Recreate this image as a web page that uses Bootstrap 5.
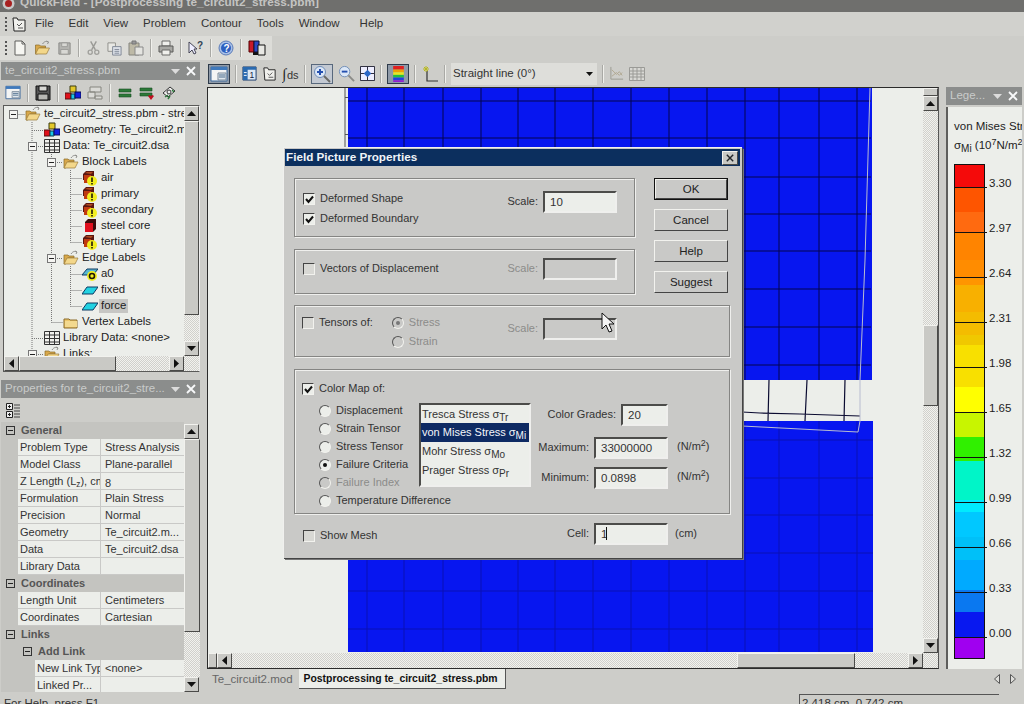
<!DOCTYPE html>
<html lang="en">
<head>
<meta charset="UTF-8">
<title>QuickField - Postprocessing te_circuit2_stress.pbm</title>
<link href="https://cdn.jsdelivr.net/npm/bootstrap@5.3.0/dist/css/bootstrap.min.css" rel="stylesheet">
<style>
    html, body { margin: 0; background: #cfcfcb; }
    body { font: 11px/1.2 "Liberation Sans", Arial, sans-serif; color: #2a2a2a; }
    .qf-app { width: 1024px; height: 704px; overflow: hidden; position: relative; background: #cdcdc9; }
    svg { display: block; flex: none; }

    /* title, menu, main toolbar */
    .qf-title { height: 12px; background: #6f6f6d; color: #c4c4c2; font-weight: bold; font-size: 11.8px; line-height: 5px; padding-left: 2px; overflow: hidden; }
    .qf-title svg { margin-right: 5px; margin-top: -3px; }
    .qf-menu { height: 24px; background: #d1d1cd; padding-left: 5px; font-size: 11.5px; color: #333; }
    .qf-menu span { margin-right: 15px; }
    .qf-menu span:nth-last-child(2) { margin-right: 20px; }
    .qf-grip { width: 2px; height: 14px; margin-right: 4px; flex: none; background: repeating-linear-gradient(#555 0 2px, transparent 2px 4px); }
    .qf-tbar { height: 24px; width: 272px; background: #dcdcd8; padding-left: 5px; gap: 6px; }
    .qf-tbar .qf-grip { margin-right: -1px; }
    .qf-sep { width: 1px; height: 18px; background: #a9a9a5; border-right: 1px solid #f0f0ec; box-sizing: content-box; flex: none; }

    /* left docks */
    .qf-main { height: 633px; }
    .qf-left { width: 204px; flex: none; padding: 2px 4px 0 1px; }
    .qf-dockhead { height: 18px; background: #8b8d8c; color: #c9cbca; padding: 0 4px; font-size: 11.5px; gap: 6px; white-space: nowrap; overflow: hidden; }
    .qf-dockhead > span { flex-grow: 1; overflow: hidden; }
    .qf-docktools { height: 25px; gap: 6px; padding-left: 4px; }
    .qf-docktools2 { height: 24px; padding-left: 5px; }
    .qf-tree { height: 267px; margin-left: 2px; border: 1px solid #5a5a58; border-right-color: #eee; display: grid; grid-template-columns: 1fr 15px; grid-template-rows: 1fr 15px; background: #eceeea; }
    .qf-treepane { position: relative; overflow: hidden; font-size: 11.4px; color: #222; }
    .qf-dots { position: absolute; left: 0; top: 0; }
    .qf-node { height: 16px; white-space: nowrap; position: relative; }
    .qf-d0 { padding-left: 5px; }
    .qf-d1 { padding-left: 24px; }
    .qf-d2 { padding-left: 43px; }
    .qf-d3 { padding-left: 62px; }
    .qf-slot { width: 9px; height: 9px; margin-right: 7px; flex: none; }
    .qf-exp { border: 1px solid #777; background: #f5f5f2; position: relative; }
    .qf-exp::after { content: ""; position: absolute; left: 1px; right: 1px; top: 3px; height: 1px; background: #222; }
    .qf-node svg { margin-right: 3px; }
    .qf-picked { background: #c6c6c4; padding: 0 2px; margin-left: -2px; }
    .qf-gap8 { height: 8px; }

    /* property grid */
    .qf-grid { height: 270px; display: flex; overflow: hidden; }
    .qf-rows { width: 183px; flex: none; font-size: 11px; color: #333; }
    .qf-prow { height: 17px; background: #c4c4c0; white-space: nowrap; }
    .qf-gutter { width: 17px; flex: none; padding-left: 5px; }
    .qf-gutter2 { width: 34px; padding-left: 22px; }
    .qf-pname, .qf-pval { background: #eceeea; height: 17px; line-height: 16px; border-bottom: 1px solid #c9c9c7; overflow: hidden; }
    .qf-pname { flex: 1 1 0; padding-left: 2px; border-right: 1px solid #c9c9c7; }
    .qf-pval { width: 83px; flex: none; padding-left: 4px; }
    .qf-pval-low { padding-top: 2px; }
    .qf-pgroup { font-weight: bold; color: #555; }
    .qf-box { display: block; width: 9px; height: 9px; border: 1px solid #333; position: relative; }
    .qf-box::after { content: ""; position: absolute; left: 1px; right: 1px; top: 3px; height: 1px; background: #222; }

    /* scrollbars */
    .qf-track { background: repeating-conic-gradient(#d0d0cc 0 25%, #f2f2ee 0 50%) 0 0 / 2px 2px; flex-grow: 1; }
    .qf-raised { background: #c9c9c5; border: 1px solid; border-color: #f2f2ee #4a4a48 #4a4a48 #f2f2ee; }
    .qf-sbtn { width: 15px; height: 15px; flex: none; display: flex; align-items: center; justify-content: center; }
    .qf-vbar { width: 15px; display: flex; flex-direction: column; }
    .qf-hbar { height: 15px; display: flex; }
    .qf-thumb-tree { height: 194px; flex: none; }
    .qf-thumb-treeh { width: 97px; flex: none; }
    .qf-thumb-prop { height: 193px; flex: none; }
    .qf-thumb-view { height: 81px; flex: none; }
    .qf-thumb-viewh { width: 118px; flex: none; }
    .qf-viewpad { height: 8px; flex: none; }
    .qf-viewpadh { width: 9px; flex: none; }
    .qf-trackA { height: 214px; flex: none; flex-grow: 0; }
    .qf-trackB { width: 505px; flex: none; flex-grow: 0; }
    .qf-propbar { width: 16px; margin-top: 2px; }

    /* centre */
    .qf-right { flex-grow: 1; min-width: 0; padding-left: 3px; }
    .qf-viewtools { height: 27px; gap: 5px; padding-left: 1px; width: 738px; }
    .qf-tgl { width: 22px; height: 20px; display: flex; align-items: center; justify-content: center; flex: none; }
    .qf-tgl-on { background: #8f9aa8; border: 1px solid #2d3a4a; }
    .qf-tgl-soft { background: #c3c9d2; border: 1px solid #58687c; }
    .qf-drop { width: 146px; height: 22px; background: #dededa; font-size: 11.5px; padding-left: 2px; color: #333; flex: none; }
    .qf-work { height: 582px; }
    .qf-view { width: 732px; flex: none; border: 1px solid #2b2b2b; border-right: 1px solid #555; display: grid; grid-template-columns: 1fr 15px; grid-template-rows: 1fr 15px; background: #eceeea; }
    .qf-plot { overflow: hidden; position: relative; }
    .qf-corner { background: repeating-conic-gradient(#d0d0cc 0 25%, #f2f2ee 0 50%) 0 0 / 2px 2px; }

    /* legend */
    .qf-legend { width: 76px; margin-left: 7px; flex: none; }
    .qf-leghead { width: 76px; }
    .qf-legbody { height: 562px; margin-top: 2px; background: #eceeea; border-left: 2px solid #5e5e5c; padding: 13px 0 0 6px; overflow: hidden; font-size: 11.5px; white-space: nowrap; color: #222; }
    .qf-legbody p { margin: 0; height: 19px; }
    .qf-legbody sub { font-size: 10px; }
    .qf-legbody sup { font-size: 9px; }
    .qf-legsvg { margin-top: 4px; margin-left: 0; }
    .qf-legsvg text { font: 11.5px "Liberation Sans", Arial, sans-serif; fill: #222; }

    /* tabs and status */
    .qf-tabs { height: 24px; border: 0; padding-left: 2px; flex-wrap: nowrap; white-space: nowrap; }
    .qf-tabs .nav-link { font-size: 11.5px; height: 20px; padding: 4px 6px 0 3px; border: 0; border-radius: 0; color: #666; background: none; margin: 0; }
    .qf-tabs .nav-link.active { background: #eceeea; color: #111; font-weight: bold; font-size: 10.4px; border-right: 1px solid #555; border-bottom: 1px solid #555; width: 207px; padding-left: 5px; }
    .qf-tabnav { gap: 10px; padding: 0 8px 4px 0; }
    .qf-status { height: 11px; font-size: 11.5px; padding: 4px 0 0 4px; overflow: hidden; color: #333; position: relative; }
    .qf-status > div { position: absolute; left: 799px; top: 1px; width: 200px; border: 1px solid #555; border-right: 0; padding: 2px 0 0 2px; height: 20px; }

    /* dialog */
    .qf-dialog { position: absolute; left: 283px; top: 147px; width: 459px; height: 411px; padding: 2px; background: #c9c9c7; border: 0; box-shadow: inset 1px 1px 0 #f0f0ee, 1px 1px 0 #444, 2px 2px 0 #777; color: #333; }
    .qf-dtitle { height: 17px; background: #0c2f5e; color: #f0f4f8; font-weight: bold; font-size: 11.7px; padding: 0 2px 0 1px; }
    .qf-x { width: 16px; height: 14px; padding: 0; display: flex; align-items: center; justify-content: center; }
    .qf-dbody { padding: 12px 10px 0 9px; }
    .qf-gbox { border: 1px solid #858583; box-shadow: 1px 1px 0 #efefed, inset 1px 1px 0 #efefed; }
    .qf-g1 { height: 59px; padding: 10px 17px 0 8px; }
    .qf-g2 { height: 45px; padding: 0 17px 6px 8px; margin-top: 12px; }
    .qf-g3 { height: 52px; margin-top: 11px; padding: 7px 112px 0 7px; }
    .qf-g4 { height: 145px; margin-top: 12px; padding: 9px 0 0 7px; }
    .qf-lin { height: 20px; white-space: nowrap; }
    .qf-chk { width: 12px; height: 12px; background: #eceeea; border: 1px solid; border-color: #444 #f2f2ee #f2f2ee #444; margin-right: 5px; flex: none; display: flex; align-items: center; justify-content: center; }
    .qf-chk-off { background: #d8d8d4; }
    .qf-rad { width: 12px; height: 12px; border-radius: 50%; background: #eceeea; border: 1px solid; border-color: #555 #f2f2ee #f2f2ee #555; margin-right: 5px; flex: none; display: flex; align-items: center; justify-content: center; }
    .qf-rad i { width: 4px; height: 4px; border-radius: 50%; background: #111; display: block; }
    .qf-rad-off { background: #c9c9c7; }
    .qf-rad-off i { background: #777; }
    .qf-mute { color: #8c8c8a; }
    .form-control.qf-inp { width: 74px; height: 22px; min-height: 0; padding: 0 0 0 5px; font-size: 11.5px; line-height: 18px; border-radius: 0; border: 2px solid; border-color: #4c4c4a #efefed #efefed #4c4c4a; background: #eceeea; color: #333; box-shadow: none; flex: none; }
    .form-control.qf-inp:disabled { background: #c9c9c7; }
    .qf-inpS.form-control { width: 47px; }
    .qf-scale { margin-left: auto; gap: 5px; height: 22px; margin-top: 2px; }
    .qf-scale3 { margin-top: 5px; }
    .qf-btncol { width: 74px; margin: 0 2px 0 19px; gap: 9px; }
    .btn.qf-btn { width: 74px; height: 22px; padding: 0; font-size: 11.5px; border-radius: 0; background: #c9c9c7; color: #222; border: 1px solid; border-color: #f2f2ee #444 #444 #f2f2ee; line-height: 19px; }
    .btn.qf-default { outline: 1px solid #111; outline-offset: -1px; border-width: 2px; }
    .qf-radcol { width: 100px; flex: none; margin-top: 3px; }
    .qf-radcol .qf-row { height: 18px; white-space: nowrap; }
    .qf-radgrp { margin-left: 19px; }
    .qf-radgrp .qf-row { height: 19px; }
    .qf-g4cols { margin-left: 17px; }
    .list-group.qf-list { width: 112px; height: 84px; margin-top: 4px; border-radius: 0; border: 2px solid; border-color: #4c4c4a #efefed #efefed #4c4c4a; background: #eceeea; flex: none; }
    .qf-list .list-group-item { height: 19px; padding: 0 0 0 1px; border: 0; border-radius: 0; background: none; color: #333; font-size: 11px; line-height: 19px; white-space: nowrap; overflow: hidden; }
    .qf-list .list-group-item.active { background: #0e2a63; color: #f4f6fa; }
    .qf-list sub { font-size: 10px; }
    .qf-flds { flex-grow: 1; margin-top: 5px; }
    .qf-fld { justify-content: flex-end; padding-right: 61px; position: relative; gap: 5px; }
    .qf-fld em { position: absolute; left: 146px; font-style: normal; white-space: nowrap; top: 3px; }
    .qf-fld em sup { font-size: 9px; }
    .qf-f2 { margin-top: 11px; }
    .qf-f3 { margin-top: 8px; }
    .qf-bottom { margin: 9px 0 0 9px; padding-right: 62px; height: 22px; }
    .qf-mesh { margin-top: 4px; }
    .qf-bottom .ms-auto { gap: 5px; position: relative; }
    .qf-cm { position: absolute; left: 108px; top: 4px; }
    .qf-caret { position: relative; }
    .qf-caret::after { content: ""; position: absolute; left: 12px; top: 4px; height: 13px; width: 1px; background: #111; }
    .qf-cursor { position: absolute; left: 318px; top: 165px; }
</style>
</head>
<body>
<svg width="0" height="0" class="position-absolute">
    <defs>
        <symbol id="t-up" viewBox="0 0 9 5"><path d="M4.500 0 9 5H0z" fill="#111"/></symbol>
        <symbol id="t-dn" viewBox="0 0 9 5"><path d="M0 0h9L4.500 5z" fill="#111"/></symbol>
        <symbol id="t-dnl" viewBox="0 0 9 5"><path d="M0 0h9L4.500 5z" fill="#dcdcdc"/></symbol>
        <symbol id="t-lf" viewBox="0 0 5 9"><path d="M5 0v9L0 4.500z" fill="#111"/></symbol>
        <symbol id="t-rt" viewBox="0 0 5 9"><path d="M0 0v9l5-4.500z" fill="#111"/></symbol>
        <symbol id="i-folder" viewBox="0 0 16 16"><path d="M1 5h5l1 1h7v8H1z" fill="#ecc66a" stroke="#8a6a2a"/><path d="M2 7h12v6H2z" fill="#f3d98f"/></symbol>
        <symbol id="i-fopen" viewBox="0 0 16 16"><path d="M1 5h4l1 1h5v2H5l-2 6H1z" fill="#d8a84a" stroke="#8a6a2a" stroke-width=".7"/><path d="M4 8h11l-3 6H1z" fill="#f3d78a" stroke="#9a7a3a" stroke-width=".7"/><path d="M8 4c2-3 4-3 6-2M14 2l-2-1M14 2l-1 2" fill="none" stroke="#8f8f8c"/></symbol>
        <symbol id="i-geom" viewBox="0 0 16 16"><path d="M5 1h6v6H5z" fill="#e3c82a" stroke="#3c3c10"/><path d="M0 8h6v6H0z" fill="#e0101a" stroke="#501010"/><path d="M6 9h4v5H6z" fill="#18c8e8" stroke="#103848"/><path d="M10 7h6v6h-6z" fill="#1020e0" stroke="#0a0a50"/></symbol>
        <symbol id="i-grid" viewBox="0 0 16 16"><path d="M.5 1.500h15v13H.5zM.5 5h15M.5 8.500h15M.5 12h15M5.500 1.500v13M10.500 1.500v13" fill="#f2f2ee" stroke="#333"/></symbol>
        <symbol id="i-warn" viewBox="0 0 16 16"><path d="M1 4l3-3h8v9H1z" fill="#5a1610"/><path d="M2 5h7v8H2z" fill="#c03a10"/><path d="M3 3l2-1h6L9 4z" fill="#b04a20"/><circle cx="10" cy="11" r="5" fill="#f2ee20"/><path d="M9.200 7.500h1.600v4.500H9.200zM9.200 13h1.600v1.500H9.200z" fill="#201808"/></symbol>
        <symbol id="i-cube" viewBox="0 0 16 16"><path d="M3 4l3-3h8v10l-3 3H3z" fill="#3a0c0c"/><path d="M3 5h8v9H3z" fill="#e0101e"/></symbol>
        <symbol id="i-para" viewBox="0 0 16 16"><path d="M5 5h11l-5 7H0z" fill="#21d2e2" stroke="#0e3a62"/></symbol>
        <symbol id="i-a0" viewBox="0 0 16 16"><path d="M5 3h11l-5 6H0z" fill="#58b8d2" stroke="#0e3a62"/><circle cx="10" cy="10" r="5" fill="#f2ee20"/><circle cx="10" cy="10" r="2.500" fill="none" stroke="#201808" stroke-width="1.600"/></symbol>
        <symbol id="i-new" viewBox="0 0 16 16"><path d="M3 1h7l3 3v11H3z" fill="#f6f6f2" stroke="#5e5e5c"/><path d="M10 1v3h3" fill="none" stroke="#5e5e5c"/></symbol>
        <symbol id="i-save" viewBox="0 0 16 16"><path d="M2 2h12v12H2z" fill="#b4b4b0" stroke="#8a8a86"/><path d="M5 2h6v4H5zM4 9h8v5H4z" fill="#d8d8d4" stroke="#9a9a96"/></symbol>
        <symbol id="i-savek" viewBox="0 0 16 16"><path d="M1 1h14v14H1z" fill="#555" stroke="#111"/><path d="M4 1h8v5H4z" fill="#d8d8d4" stroke="#111"/><path d="M3 9h10v6H3z" fill="#b8b8b4" stroke="#111"/></symbol>
        <symbol id="i-cut" viewBox="0 0 16 16"><path d="M5 1l5 9M11 1L6 10" stroke="#9a9a96" stroke-width="1.500" fill="none"/><circle cx="4.500" cy="12.500" r="2.200" fill="none" stroke="#a0a09c" stroke-width="1.400"/><circle cx="11.500" cy="12.500" r="2.200" fill="none" stroke="#a0a09c" stroke-width="1.400"/></symbol>
        <symbol id="i-copy" viewBox="0 0 16 16"><path d="M1 2h8v9H1z" fill="#e8e8e4" stroke="#8e8e8a"/><path d="M6 6h9v9H6z" fill="#dfe3ea" stroke="#7d8594"/><path d="M8 9h5M8 11h5M8 13h5" stroke="#7d8594"/></symbol>
        <symbol id="i-paste" viewBox="0 0 16 16"><path d="M1 3h10v12H1z" fill="#bdb9a6" stroke="#85857f"/><path d="M4 1h4v3H4z" fill="#999" stroke="#777"/><path d="M7 7h8v8H7z" fill="#e4e4e0" stroke="#888"/></symbol>
        <symbol id="i-print" viewBox="0 0 16 16"><path d="M4 1h8v5H4z" fill="#f0f0ec" stroke="#6a6a68"/><path d="M1 6h14v6H1z" fill="#a8a8a4" stroke="#5a5a58"/><path d="M4 10h8v5H4z" fill="#f0f0ec" stroke="#6a6a68"/></symbol>
        <symbol id="i-what" viewBox="0 0 16 16"><path d="M1 2v11l3-3 2 4 2-1-2-4h3z" fill="#eef" stroke="#445"/><text x="9" y="9" font-size="10" font-weight="bold" fill="#345" font-family="Liberation Sans">?</text></symbol>
        <symbol id="i-help" viewBox="0 0 16 16"><circle cx="8" cy="8" r="7" fill="#a9c0e6" stroke="#5c7cb8"/><circle cx="8" cy="8" r="5" fill="#2d5fc0"/><text x="5.500" y="11.500" font-size="10" font-weight="bold" fill="#fff" font-family="Liberation Sans">?</text></symbol>
        <symbol id="i-books" viewBox="0 0 18 16"><path d="M5 3h6v12H5z" fill="#111"/><path d="M1 1h5v11H1z" fill="#c81a28" stroke="#500"/><path d="M6 1h5v11H6z" fill="#2a48c0" stroke="#113"/><path d="M10 5h7v10h-7z" fill="#e8e8e4" stroke="#111"/></symbol>
        <symbol id="i-win" viewBox="0 0 18 16"><path d="M1 1h16v14H1z" fill="#f3f4f4" stroke="#3f6a9c"/><path d="M1 1h16v3H1z" fill="#3f79bc"/><path d="M8 7h8v7H8z" fill="#e0e8ee" stroke="#7a8a9a"/><path d="M9 9h6M9 11h6" stroke="#4a6a8a"/></symbol>
        <symbol id="i-tool" viewBox="0 0 16 16"><path d="M3 2h11v5H3zM1 7h7v6H1zM8 11h7v3H8z" fill="#dadad6" stroke="#85857f"/></symbol>
        <symbol id="i-eq" viewBox="0 0 16 16"><path d="M2 4h12v3H2zM2 9h12v3H2z" fill="#2c7a38" stroke="#1a4a22" stroke-width=".6"/></symbol>
        <symbol id="i-eqh" viewBox="0 0 16 16"><path d="M1 3h12v3H1zM1 8h12v3H1z" fill="#2c7a38" stroke="#1a4a22" stroke-width=".6"/><path d="M9 11l3 4 3-4-1.500-1-1.500 1-1.500-1z" fill="#c01020"/></symbol>
        <symbol id="i-plug" viewBox="0 0 16 16"><path d="M2 8l7-6 5 4-7 6z" fill="#eee" stroke="#333"/><path d="M4 12l3-2M7 14l2-3M11 5l2 2" stroke="#2a7a3a" stroke-width="1.400"/><circle cx="8" cy="7" r="2" fill="none" stroke="#333"/></symbol>
        <symbol id="i-book1" viewBox="0 0 16 16"><path d="M1 1h14v14H1z" fill="#dce8f4" stroke="#1a3a6a"/><path d="M1 1h14v3H1zM1 4h5v11H1z" fill="#2a6ab0"/><path d="M2 7h3M2 10h3" stroke="#fff"/><text x="8" y="13" font-size="9" fill="#102040" font-family="Liberation Sans">1</text></symbol>
        <symbol id="i-clip" viewBox="0 0 16 16"><path d="M2 2h4l1 2h7v11H3z" fill="#f0f0ec" stroke="#222"/><path d="M6 8l2 2 3-3M7 12h5" stroke="#555" fill="none"/></symbol>
        <symbol id="i-zin" viewBox="0 0 18 18"><circle cx="7" cy="7" r="5.500" fill="#dbe7f7" stroke="#6f8db8"/><path d="M4 7h6M7 4v6" stroke="#2450b0" stroke-width="2"/><path d="M11 11l6 6" stroke="#6a6a66" stroke-width="2"/></symbol>
        <symbol id="i-zout" viewBox="0 0 18 18"><circle cx="7" cy="7" r="5.500" fill="#dbe7f7" stroke="#6f8db8"/><path d="M4 7h6" stroke="#2450b0" stroke-width="2"/><path d="M11 11l6 6" stroke="#8a8a86" stroke-width="2"/></symbol>
        <symbol id="i-fit" viewBox="0 0 16 16"><path d="M.5.500h15v15H.5z" fill="#eef" stroke="#223"/><path d="M8 1v14M1 8h14" stroke="#223"/><path d="M8 4l4 4-4 4-4-4z" fill="#2a66c8"/></symbol>
        <symbol id="i-rain" viewBox="0 0 12 18"><path d="M0 0h12v4H0z" fill="#e02020"/><path d="M0 4h12v3H0z" fill="#f0a000"/><path d="M0 7h12v3H0z" fill="#e8e820"/><path d="M0 10h12v3H0z" fill="#20c040"/><path d="M0 13h12v3H0z" fill="#2040e0"/><path d="M0 16h12v2H0z" fill="#9020d0"/></symbol>
        <symbol id="i-wand" viewBox="0 0 18 18"><path d="M6 6v10h11" fill="none" stroke="#333" stroke-width="1.200"/><path d="M5 1v6M2 4h6M3 2l4 4M7 2L3 6" stroke="#b8b820"/></symbol>
        <symbol id="i-graph" viewBox="0 0 16 16"><path d="M2 1v13h13" fill="none" stroke="#9a9a90"/><path d="M3 4l5 5 3-3 3 4M3 11l5-4 3 3 3-3" fill="none" stroke="#b0a890"/></symbol>
        <symbol id="i-tab" viewBox="0 0 16 16"><path d="M.5 1.500h15v13H.5zM.5 5h15M.5 8h15M.5 11h15M4 1.500v13M8 1.500v13M12 1.500v13" fill="#d8d8d4" stroke="#9a9a96"/></symbol>
        <symbol id="i-check" viewBox="0 0 11 11"><path d="M2 5l2.500 3L9 2.500" fill="none" stroke="#111" stroke-width="2"/></symbol>
        <symbol id="i-xmark" viewBox="0 0 10 10"><path d="M1 1l8 8M9 1L1 9" stroke="currentColor" stroke-width="1.800"/></symbol>
    </defs>
</svg>

<div class="qf-app d-flex flex-column">
    <div class="qf-title d-flex">
        <svg width="13" height="13" viewBox="0 0 13 13"><circle cx="6.500" cy="6.500" r="6" fill="#c8c8c8"/><circle cx="6.500" cy="6.500" r="3.500" fill="#a82020"/></svg>
        <span>QuickField - [Postprocessing te_circuit2_stress.pbm]</span>
    </div>

    <div class="qf-menu d-flex align-items-center">
        <div class="qf-grip"></div>
        <svg class="me-2" width="16" height="16"><use href="#i-clip"/></svg>
        <span>File</span><span>Edit</span><span>View</span><span>Problem</span><span>Contour</span><span>Tools</span><span>Window</span><span>Help</span>
    </div>

    <div class="qf-tbar d-flex align-items-center">
        <div class="qf-grip"></div>
        <svg width="16" height="16"><use href="#i-new"/></svg>
        <svg width="17" height="16"><use href="#i-fopen"/></svg>
        <svg width="15" height="15"><use href="#i-save"/></svg>
        <div class="qf-sep"></div>
        <svg width="15" height="16"><use href="#i-cut"/></svg>
        <svg width="15" height="15"><use href="#i-copy"/></svg>
        <svg width="16" height="16"><use href="#i-paste"/></svg>
        <div class="qf-sep"></div>
        <svg width="16" height="16"><use href="#i-print"/></svg>
        <div class="qf-sep"></div>
        <svg width="16" height="16"><use href="#i-what"/></svg>
        <div class="qf-sep"></div>
        <svg width="16" height="16"><use href="#i-help"/></svg>
        <div class="qf-sep"></div>
        <svg width="18" height="16"><use href="#i-books"/></svg>
    </div>

    <div class="qf-main d-flex">
        <div class="qf-left">
            <div class="qf-dockhead d-flex align-items-center">
                <span>te_circuit2_stress.pbm</span>
                <svg width="9" height="5"><use href="#t-dnl"/></svg>
                <svg class="text-light" width="10" height="10"><use href="#i-xmark"/></svg>
            </div>
            <div class="qf-docktools d-flex align-items-center">
                <svg width="16" height="15"><use href="#i-win"/></svg>
                <div class="qf-sep"></div>
                <svg width="16" height="16"><use href="#i-savek"/></svg>
                <div class="qf-sep"></div>
                <svg width="16" height="16"><use href="#i-geom"/></svg>
                <svg width="16" height="16"><use href="#i-tool"/></svg>
                <div class="qf-sep"></div>
                <svg width="16" height="16"><use href="#i-eq"/></svg>
                <svg width="16" height="16"><use href="#i-eqh"/></svg>
                <svg width="16" height="16"><use href="#i-plug"/></svg>
            </div>
            <div class="qf-tree">
                <div class="qf-treepane">
                    <svg class="qf-dots" width="180" height="252" viewBox="4 106 180 252"><path d="M32 122V358M17.500 114.500H25M32 130.500H44M32 146.500H28M36 146.500H44M51.500 154V322.500M51.500 162.500H47M55 162.500H63M70.500 170V242.500M70.500 178.500H82M70.500 194.500H82M70.500 210.500H82M70.500 226.500H82M70.500 242.500H82M51.500 258.500H47M55 258.500H63M70.500 266V306.500M70.500 274.500H82M70.500 290.500H82M70.500 306.500H82M51.500 322.500H63M32 338.500H44M32 354.500H28M36 354.500H44" fill="none" stroke="#777" stroke-dasharray="1 1"/></svg>
                    <div class="qf-node qf-d0 d-flex align-items-center"><i class="qf-slot qf-exp"></i><svg width="16" height="16"><use href="#i-fopen"/></svg>te_circuit2_stress.pbm - stress</div>
                    <div class="qf-node qf-d1 d-flex align-items-center"><i class="qf-slot"></i><svg width="16" height="16"><use href="#i-geom"/></svg>Geometry: Te_circuit2.mod</div>
                    <div class="qf-node qf-d1 d-flex align-items-center"><i class="qf-slot qf-exp"></i><svg width="16" height="16"><use href="#i-grid"/></svg>Data: Te_circuit2.dsa</div>
                    <div class="qf-node qf-d2 d-flex align-items-center"><i class="qf-slot qf-exp"></i><svg width="16" height="16"><use href="#i-fopen"/></svg>Block Labels</div>
                    <div class="qf-node qf-d3 d-flex align-items-center"><i class="qf-slot"></i><svg width="16" height="16"><use href="#i-warn"/></svg>air</div>
                    <div class="qf-node qf-d3 d-flex align-items-center"><i class="qf-slot"></i><svg width="16" height="16"><use href="#i-warn"/></svg>primary</div>
                    <div class="qf-node qf-d3 d-flex align-items-center"><i class="qf-slot"></i><svg width="16" height="16"><use href="#i-warn"/></svg>secondary</div>
                    <div class="qf-node qf-d3 d-flex align-items-center"><i class="qf-slot"></i><svg width="16" height="16"><use href="#i-cube"/></svg>steel core</div>
                    <div class="qf-node qf-d3 d-flex align-items-center"><i class="qf-slot"></i><svg width="16" height="16"><use href="#i-warn"/></svg>tertiary</div>
                    <div class="qf-node qf-d2 d-flex align-items-center"><i class="qf-slot qf-exp"></i><svg width="16" height="16"><use href="#i-fopen"/></svg>Edge Labels</div>
                    <div class="qf-node qf-d3 d-flex align-items-center"><i class="qf-slot"></i><svg width="16" height="16"><use href="#i-a0"/></svg>a0</div>
                    <div class="qf-node qf-d3 d-flex align-items-center"><i class="qf-slot"></i><svg width="16" height="16"><use href="#i-para"/></svg>fixed</div>
                    <div class="qf-node qf-d3 d-flex align-items-center"><i class="qf-slot"></i><svg width="16" height="16"><use href="#i-para"/></svg><span class="qf-picked">force</span></div>
                    <div class="qf-node qf-d2 d-flex align-items-center"><i class="qf-slot"></i><svg width="16" height="16"><use href="#i-folder"/></svg>Vertex Labels</div>
                    <div class="qf-node qf-d1 d-flex align-items-center"><i class="qf-slot"></i><svg width="16" height="16"><use href="#i-grid"/></svg>Library Data: &lt;none&gt;</div>
                    <div class="qf-node qf-d1 d-flex align-items-center"><i class="qf-slot qf-exp"></i><svg width="16" height="16"><use href="#i-fopen"/></svg>Links:</div>
                </div>
                <div class="qf-vbar">
                    <div class="qf-sbtn qf-raised"><svg width="9" height="5"><use href="#t-up"/></svg></div>
                    <div class="qf-raised qf-thumb-tree"></div>
                    <div class="qf-track"></div>
                    <div class="qf-sbtn qf-raised"><svg width="9" height="5"><use href="#t-dn"/></svg></div>
                </div>
                <div class="qf-hbar">
                    <div class="qf-sbtn qf-raised"><svg width="5" height="9"><use href="#t-lf"/></svg></div>
                    <div class="qf-raised qf-thumb-treeh"></div>
                    <div class="qf-track"></div>
                    <div class="qf-sbtn qf-raised"><svg width="5" height="9"><use href="#t-rt"/></svg></div>
                </div>
                <div class="qf-corner"></div>
            </div>
            <div class="qf-gap8"></div>
            <div class="qf-dockhead d-flex align-items-center">
                <span>Properties for te_circuit2_stre...</span>
                <svg width="9" height="5"><use href="#t-dnl"/></svg>
                <svg class="text-light" width="10" height="10"><use href="#i-xmark"/></svg>
            </div>
            <div class="qf-docktools2 d-flex align-items-center">
                <svg width="15" height="15" viewBox="0 0 15 15"><path d="M.5.500h6v6h-6zM.5 8.500h6v6h-6z" fill="#eee" stroke="#222"/><path d="M2 3.500h3M3.500 2v3M2 11.500h3M3.500 10v3" stroke="#222"/><path d="M8 2h6M8 5h6M8 8h6M8 11h6M8 14h6" stroke="#444"/></svg>
            </div>
            <div class="qf-grid">
                <div class="qf-rows">
                    <div class="qf-prow d-flex align-items-center qf-pgroup"><div class="qf-gutter"><i class="qf-box"></i></div>&nbsp;General</div>
                    <div class="qf-prow d-flex"><div class="qf-gutter"></div><div class="qf-pname">Problem Type</div><div class="qf-pval">Stress Analysis</div></div>
                    <div class="qf-prow d-flex"><div class="qf-gutter"></div><div class="qf-pname">Model Class</div><div class="qf-pval">Plane-parallel</div></div>
                    <div class="qf-prow d-flex"><div class="qf-gutter"></div><div class="qf-pname">Z Length (L<sub>z</sub>), cm</div><div class="qf-pval qf-pval-low">8</div></div>
                    <div class="qf-prow d-flex"><div class="qf-gutter"></div><div class="qf-pname">Formulation</div><div class="qf-pval">Plain Stress</div></div>
                    <div class="qf-prow d-flex"><div class="qf-gutter"></div><div class="qf-pname">Precision</div><div class="qf-pval">Normal</div></div>
                    <div class="qf-prow d-flex"><div class="qf-gutter"></div><div class="qf-pname">Geometry</div><div class="qf-pval">Te_circuit2.m...</div></div>
                    <div class="qf-prow d-flex"><div class="qf-gutter"></div><div class="qf-pname">Data</div><div class="qf-pval">Te_circuit2.dsa</div></div>
                    <div class="qf-prow d-flex"><div class="qf-gutter"></div><div class="qf-pname">Library Data</div><div class="qf-pval"></div></div>
                    <div class="qf-prow d-flex align-items-center qf-pgroup"><div class="qf-gutter"><i class="qf-box"></i></div>&nbsp;Coordinates</div>
                    <div class="qf-prow d-flex"><div class="qf-gutter"></div><div class="qf-pname">Length Unit</div><div class="qf-pval">Centimeters</div></div>
                    <div class="qf-prow d-flex"><div class="qf-gutter"></div><div class="qf-pname">Coordinates</div><div class="qf-pval">Cartesian</div></div>
                    <div class="qf-prow d-flex align-items-center qf-pgroup"><div class="qf-gutter"><i class="qf-box"></i></div>&nbsp;Links</div>
                    <div class="qf-prow d-flex align-items-center qf-pgroup"><div class="qf-gutter qf-gutter2"><i class="qf-box"></i></div>&nbsp;Add Link</div>
                    <div class="qf-prow d-flex"><div class="qf-gutter qf-gutter2"></div><div class="qf-pname">New Link Type</div><div class="qf-pval">&lt;none&gt;</div></div>
                    <div class="qf-prow d-flex"><div class="qf-gutter qf-gutter2"></div><div class="qf-pname">Linked Pr...</div><div class="qf-pval"></div></div>
                </div>
                <div class="qf-vbar qf-propbar">
                    <div class="qf-sbtn qf-raised"><svg width="9" height="5"><use href="#t-up"/></svg></div>
                    <div class="qf-raised qf-thumb-prop"></div>
                    <div class="qf-track"></div>
                    <div class="qf-sbtn qf-raised"><svg width="9" height="5"><use href="#t-dn"/></svg></div>
                </div>
            </div>
        </div>

        <div class="qf-right">
            <div class="qf-viewtools d-flex align-items-center">
                <div class="qf-tgl qf-tgl-on"><svg width="18" height="16"><use href="#i-win"/></svg></div>
                <div class="qf-sep"></div>
                <svg width="15" height="15"><use href="#i-book1"/></svg>
                <svg width="15" height="15"><use href="#i-clip"/></svg>
                <svg width="17" height="18" viewBox="0 0 17 18"><text x="0" y="14" font-size="15" fill="#222" font-family="Liberation Serif">&#8747;</text><text x="5" y="14" font-size="11" fill="#333" font-family="Liberation Sans">ds</text></svg>
                <div class="qf-sep"></div>
                <div class="qf-tgl qf-tgl-soft"><svg width="18" height="18"><use href="#i-zin"/></svg></div>
                <svg width="17" height="17"><use href="#i-zout"/></svg>
                <svg width="15" height="15"><use href="#i-fit"/></svg>
                <div class="qf-sep"></div>
                <div class="qf-tgl qf-tgl-on"><svg width="11" height="16"><use href="#i-rain"/></svg></div>
                <div class="qf-sep"></div>
                <svg width="18" height="18"><use href="#i-wand"/></svg>
                <div class="qf-sep"></div>
                <div class="qf-drop d-flex align-items-center justify-content-between">
                    Straight line (0°)
                    <svg class="me-1" width="7" height="4"><use href="#t-dn"/></svg>
                </div>
                <div class="qf-sep"></div>
                <svg width="15" height="15"><use href="#i-graph"/></svg>
                <svg width="16" height="16"><use href="#i-tab"/></svg>
            </div>

            <div class="qf-work d-flex">
                <div class="qf-view">
                    <div class="qf-plot">
                        <svg width="715" height="566" viewBox="208 88 715 566">
                            <rect x="348" y="88" width="524" height="292" fill="#0716f0"/>
                            <rect x="348" y="421" width="525" height="231" fill="#0716f0"/>
                            <path d="M345 88V155M345 97.500H348M345 134.500H348" stroke="#555" fill="none"/>
                            <path d="M367 88V380M404 88V380M443 88V380M481 88V380M518 88V380M555 88V380M593 88V380M631 88V380M669 88V380M707 88V380M745 88V380M779 88V380M819 88V380M857 88V380M348 101H871M348 138H871M348 177H871M348 214H871M348 251H871M348 289H871M348 327H871M348 365H871" stroke="#05054e" fill="none"/>
                            <path d="M367 421V652M404 421V652M443 421V652M481 421V652M518 421V652M555 421V652M593 421V652M631 421V652M669 421V652M707 421V652M745 421V652M779 421V652M819 421V652M857 421V652M348 440H873M348 478H873M348 515H873M348 553H873M348 591H873M348 629H873" stroke="#0a10b4" fill="none"/>
                            <path d="M769 380L768 421M807 380L805 421M845 380L844 421M742 412L760 413L800 414L860 416" stroke="#0a0a30" stroke-width="1.200" fill="none"/>
                            <path d="M870 88L865 260L860 380V421L858 432L742 426" stroke="#b8bcd0" fill="none"/>
                        </svg>
                    </div>
                    <div class="qf-vbar">
                        <div class="qf-raised qf-viewpad"></div>
                        <div class="qf-sbtn qf-raised"><svg width="9" height="5"><use href="#t-up"/></svg></div>
                        <div class="qf-track qf-trackA"></div>
                        <div class="qf-raised qf-thumb-view"></div>
                        <div class="qf-track"></div>
                        <div class="qf-sbtn qf-raised"><svg width="9" height="5"><use href="#t-dn"/></svg></div>
                    </div>
                    <div class="qf-hbar">
                        <div class="qf-raised qf-viewpadh"></div>
                        <div class="qf-sbtn qf-raised"><svg width="5" height="9"><use href="#t-lf"/></svg></div>
                        <div class="qf-track qf-trackB"></div>
                        <div class="qf-raised qf-thumb-viewh"></div>
                        <div class="qf-track"></div>
                        <div class="qf-sbtn qf-raised"><svg width="5" height="9"><use href="#t-rt"/></svg></div>
                    </div>
                    <div class="qf-corner"></div>
                </div>

                <div class="qf-legend">
                    <div class="qf-dockhead qf-leghead d-flex align-items-center">
                        <span>Lege...</span>
                        <svg width="9" height="5"><use href="#t-dnl"/></svg>
                        <svg class="text-light" width="10" height="10"><use href="#i-xmark"/></svg>
                    </div>
                    <div class="qf-legbody">
                        <p>von Mises Stress</p>
                        <p>σ<sub>Mi</sub> (10<sup>7</sup>N/m<sup>2</sup>)</p>
                        <svg class="qf-legsvg" width="68" height="508" viewBox="954 162 68 508">
                            <rect x="954" y="164" width="30" height="23" fill="#f50a0a"/>
                            <rect x="954" y="187" width="30" height="25" fill="#fe5500"/>
                            <rect x="954" y="212" width="30" height="20" fill="#ff6a10"/>
                            <rect x="954" y="232" width="30" height="28" fill="#ff8400"/>
                            <rect x="954" y="260" width="30" height="17" fill="#ff8c00"/>
                            <rect x="954" y="277" width="30" height="8" fill="#ff9500"/>
                            <rect x="954" y="285" width="30" height="27" fill="#f8b000"/>
                            <rect x="954" y="312" width="30" height="23" fill="#f4bc00"/>
                            <rect x="954" y="335" width="30" height="10" fill="#f0c800"/>
                            <rect x="954" y="345" width="30" height="42" fill="#f8e000"/>
                            <rect x="954" y="387" width="30" height="25" fill="#ffff00"/>
                            <rect x="954" y="412" width="30" height="25" fill="#c8f500"/>
                            <rect x="954" y="437" width="30" height="24" fill="#30f000"/>
                            <rect x="954" y="461" width="30" height="39" fill="#00f5c8"/>
                            <rect x="954" y="500" width="30" height="12" fill="#00eaff"/>
                            <rect x="954" y="512" width="30" height="25" fill="#00c8ff"/>
                            <rect x="954" y="537" width="30" height="23" fill="#00c0f8"/>
                            <rect x="954" y="560" width="30" height="30" fill="#00aaff"/>
                            <rect x="954" y="590" width="30" height="22" fill="#0a78f0"/>
                            <rect x="954" y="612" width="30" height="25" fill="#0818f0"/>
                            <rect x="954" y="637" width="30" height="21" fill="#a000f0"/>
                            <rect x="954.500" y="164.500" width="30" height="494" fill="none" stroke="#111"/>
                            <path d="M954 187.500H987M954 232.500H987M954 277.500H987M954 322.500H987M954 367.500H987M954 412.500H987M954 457.500H987M954 502.500H987M954 547.500H987M954 592.500H987M954 637.500H987" stroke="#111"/>
                            <text x="989" y="187">3.30</text><text x="989" y="232">2.97</text><text x="989" y="277">2.64</text><text x="989" y="322">2.31</text><text x="989" y="367">1.98</text><text x="989" y="412">1.65</text><text x="989" y="457">1.32</text><text x="989" y="502">0.99</text><text x="989" y="547">0.66</text><text x="989" y="592">0.33</text><text x="989" y="637">0.00</text>
                        </svg>
                    </div>
                </div>
            </div>

            <div class="d-flex justify-content-between align-items-center">
                <ul class="nav nav-tabs qf-tabs">
                    <li class="nav-item"><a class="nav-link" href="#">Te_circuit2.mod</a></li>
                    <li class="nav-item"><a class="nav-link active" href="#">Postprocessing te_circuit2_stress.pbm</a></li>
                </ul>
                <div class="qf-tabnav d-flex">
                    <svg width="6" height="10" viewBox="0 0 6 10"><path d="M5.500.500v9L.5 5z" fill="#dededa" stroke="#555"/></svg>
                    <svg width="6" height="10" viewBox="0 0 6 10"><path d="M.5.500v9L5.500 5z" fill="#dededa" stroke="#555"/></svg>
                </div>
            </div>
        </div>
    </div>

    <div class="qf-status">For Help, press F1<div>2.418 cm, 0.742 cm</div></div>

    <!-- Field Picture Properties dialog, floats over the plot -->
    <div class="qf-dialog">
        <div class="qf-dtitle d-flex align-items-center justify-content-between">
            Field Picture Properties
            <div class="qf-x qf-raised"><svg class="text-dark" width="8" height="8"><use href="#i-xmark"/></svg></div>
        </div>
        <div class="qf-dbody">
            <div class="d-flex">
                <div class="flex-grow-1">
                    <div class="qf-gbox qf-g1 d-flex">
                        <div>
                            <div class="qf-lin d-flex align-items-center"><span class="qf-chk"><svg width="11" height="11"><use href="#i-check"/></svg></span>Deformed Shape</div>
                            <div class="qf-lin d-flex align-items-center"><span class="qf-chk"><svg width="11" height="11"><use href="#i-check"/></svg></span>Deformed Boundary</div>
                        </div>
                        <div class="qf-scale d-flex align-items-center">Scale: <input class="form-control qf-inp" value="10"></div>
                    </div>
                    <div class="qf-gbox qf-g2 d-flex align-items-center">
                        <span class="qf-chk qf-chk-off"></span>Vectors of Displacement
                        <div class="qf-scale d-flex align-items-center qf-mute m-0 ms-auto">Scale: <input class="form-control qf-inp" disabled></div>
                    </div>
                </div>
                <div class="qf-btncol d-flex flex-column flex-shrink-0">
                    <button class="btn qf-btn qf-default">OK</button>
                    <button class="btn qf-btn">Cancel</button>
                    <button class="btn qf-btn">Help</button>
                    <button class="btn qf-btn">Suggest</button>
                </div>
            </div>

            <div class="qf-gbox qf-g3 d-flex">
                <div class="qf-lin d-flex align-items-center"><span class="qf-chk qf-chk-off"></span>Tensors of:</div>
                <div class="qf-radgrp qf-mute">
                    <div class="qf-row m-0 d-flex align-items-center flex-nowrap"><span class="qf-rad qf-rad-off"><i></i></span>Stress</div>
                    <div class="qf-row m-0 d-flex align-items-center flex-nowrap"><span class="qf-rad qf-rad-off"></span>Strain</div>
                </div>
                <div class="qf-scale qf-scale3 d-flex align-items-center qf-mute">Scale: <input class="form-control qf-inp" disabled></div>
            </div>

            <div class="qf-gbox qf-g4">
                <div class="qf-lin d-flex align-items-center"><span class="qf-chk"><svg width="11" height="11"><use href="#i-check"/></svg></span>Color Map of:</div>
                <div class="qf-g4cols d-flex">
                    <div class="qf-radcol">
                        <div class="qf-row m-0 d-flex align-items-center flex-nowrap"><span class="qf-rad"></span>Displacement</div>
                        <div class="qf-row m-0 d-flex align-items-center flex-nowrap"><span class="qf-rad"></span>Strain Tensor</div>
                        <div class="qf-row m-0 d-flex align-items-center flex-nowrap"><span class="qf-rad"></span>Stress Tensor</div>
                        <div class="qf-row m-0 d-flex align-items-center flex-nowrap"><span class="qf-rad"><i></i></span>Failure Criteria</div>
                        <div class="qf-row m-0 d-flex align-items-center flex-nowrap qf-mute"><span class="qf-rad qf-rad-off"></span>Failure Index</div>
                        <div class="qf-row m-0 d-flex align-items-center flex-nowrap"><span class="qf-rad"></span>Temperature Difference</div>
                    </div>
                    <div class="list-group qf-list">
                        <div class="list-group-item">Tresca Stress σ<sub>Tr</sub></div>
                        <div class="list-group-item active">von Mises Stress σ<sub>Mi</sub></div>
                        <div class="list-group-item">Mohr Stress σ<sub>Mo</sub></div>
                        <div class="list-group-item">Prager Stress σ<sub>Pr</sub></div>
                    </div>
                    <div class="qf-flds">
                        <div class="qf-fld d-flex align-items-center">Color Grades: <input class="form-control qf-inp qf-inpS" value="20"></div>
                        <div class="qf-fld qf-f2 d-flex align-items-center">Maximum: <input class="form-control qf-inp" value="33000000"><em>(N/m<sup>2</sup>)</em></div>
                        <div class="qf-fld qf-f3 d-flex align-items-center">Minimum: <input class="form-control qf-inp" value="0.0898"><em>(N/m<sup>2</sup>)</em></div>
                    </div>
                </div>
            </div>

            <div class="qf-bottom d-flex align-items-center">
                <div class="qf-mesh d-flex align-items-center"><span class="qf-chk qf-chk-off"></span>Show Mesh</div>
                <div class="ms-auto d-flex align-items-center">Cell: <span class="qf-caret d-block"><input class="form-control qf-inp" value="1"></span><span class="qf-cm">(cm)</span></div>
            </div>
        </div>
        <svg class="qf-cursor" width="14" height="22" viewBox="0 0 14 22"><path d="M1 1v16l4-4 3 7 3-1-3-7h5z" fill="#f4f4f4" stroke="#111"/></svg>
    </div>
</div>
<script src="https://cdn.jsdelivr.net/npm/bootstrap@5.3.0/dist/js/bootstrap.bundle.min.js"></script>
</body>
</html>
